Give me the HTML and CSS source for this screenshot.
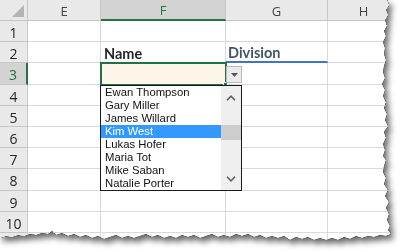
FILE: index.html
```html
<!DOCTYPE html>
<html lang="en">
<head>
    <meta charset="UTF-8">
    <title>Data Validation List</title>
    <link rel="stylesheet" href="styles.css">
</head>
<body>
    <div class="paper">
        <div class="sheet">
            <div class="grid">
                <div class="corner"><span class="corner-mark"></span></div>
                <div class="col-head">E</div>
                <div class="col-head active">F</div>
                <div class="col-head">G</div>
                <div class="col-head">H</div>

                <div class="row-head">1</div>
                <div class="cell"></div><div class="cell"></div><div class="cell"></div><div class="cell"></div>

                <div class="row-head">2</div>
                <div class="cell"></div>
                <div class="cell title">Name</div>
                <div class="cell title heading">Division</div>
                <div class="cell"></div>

                <div class="row-head active">3</div>
                <div class="cell"></div>
                <div class="cell selected"></div>
                <div class="cell"></div>
                <div class="cell"></div>

                <div class="row-head">4</div>
                <div class="cell"></div><div class="cell"></div><div class="cell"></div><div class="cell"></div>
                <div class="row-head">5</div>
                <div class="cell"></div><div class="cell"></div><div class="cell"></div><div class="cell"></div>
                <div class="row-head">6</div>
                <div class="cell"></div><div class="cell"></div><div class="cell"></div><div class="cell"></div>
                <div class="row-head">7</div>
                <div class="cell"></div><div class="cell"></div><div class="cell"></div><div class="cell"></div>
                <div class="row-head">8</div>
                <div class="cell"></div><div class="cell"></div><div class="cell"></div><div class="cell"></div>
                <div class="row-head">9</div>
                <div class="cell"></div><div class="cell"></div><div class="cell"></div><div class="cell"></div>
                <div class="row-head">10</div>
                <div class="cell"></div><div class="cell"></div><div class="cell"></div><div class="cell"></div>
                <div class="row-head">11</div>
                <div class="cell"></div><div class="cell"></div><div class="cell"></div><div class="cell"></div>
            </div>

            <div class="fill-handle"></div>

            <div class="dropdown-btn">
                <svg width="7" height="4" viewBox="0 0 7 4"><polygon points="0,0 7,0 3.5,4" fill="#555"/></svg>
            </div>

            <div class="listbox">
                <ul class="items">
                    <li>Ewan Thompson</li>
                    <li>Gary Miller</li>
                    <li>James Willard</li>
                    <li class="picked">Kim West</li>
                    <li>Lukas Hofer</li>
                    <li>Maria Tot</li>
                    <li>Mike Saban</li>
                    <li>Natalie Porter</li>
                </ul>
                <div class="scrollbar">
                    <svg class="arrow up" width="10" height="6" viewBox="0 0 10 6"><polyline points="1,5.2 5,1.2 9,5.2" fill="none" stroke="#606060" stroke-width="1.6"/></svg>
                    <div class="thumb"></div>
                    <svg class="arrow down" width="10" height="6" viewBox="0 0 10 6"><polyline points="1,0.8 5,4.8 9,0.8" fill="none" stroke="#606060" stroke-width="1.6"/></svg>
                </div>
            </div>
        </div>
    </div>
</body>
</html>
```

FILE: styles.css
```css
:root {
    --grid-line: #d9d9d9;
    --head-bg: #e9e9e9;
    --head-line: #c6c6c6;
    --head-active: #d3d3d3;
    --excel-green: #217346;
}

* {
    margin: 0;
    padding: 0;
    box-sizing: border-box;
}

body {
    background: white;
    width: 403px;
    height: 252px;
    overflow: hidden;
}

/* torn paper edge + shadow */
.paper {
    width: 403px;
    height: 252px;
    filter: drop-shadow(0 0 0.5px #000) drop-shadow(0 0 0.4px #000) drop-shadow(3px 4px 3px rgba(0, 0, 0, 0.6));
}

.sheet {
    position: relative;
    width: 403px;
    height: 252px;
    background: white;
    clip-path: polygon(-10px -10px, 388px -10px, 387px 0px, 389px 5px, 386px 10px, 388px 15px, 385px 20px, 387px 26px, 384px 31px, 386px 36px, 383px 42px, 385px 48px, 384px 54px, 386px 60px, 384px 66px, 383px 72px, 385px 78px, 382px 84px, 385px 90px, 383px 96px, 386px 102px, 384px 108px, 387px 114px, 385px 120px, 388px 126px, 384px 132px, 386px 138px, 383px 144px, 385px 150px, 383px 156px, 386px 160px, 384px 166px, 383px 172px, 386px 178px, 384px 184px, 388px 190px, 385px 196px, 389px 202px, 386px 208px, 389px 214px, 387px 220px, 390px 226px, 388px 230px, 391px 234px, 386px 236px, 380px 235px, 374px 237px, 368px 236px, 362px 238px, 356px 236px, 350px 239px, 344px 237px, 338px 240px, 332px 238px, 326px 240px, 320px 238px, 314px 240px, 308px 237px, 302px 239px, 296px 237px, 290px 240px, 284px 236px, 278px 238px, 272px 236px, 266px 238px, 260px 235px, 254px 237px, 248px 234px, 242px 236px, 236px 234px, 230px 237px, 224px 235px, 218px 237px, 212px 234px, 206px 236px, 200px 238px, 194px 235px, 188px 237px, 182px 235px, 176px 238px, 170px 236px, 164px 238px, 158px 235px, 152px 237px, 146px 234px, 140px 236px, 134px 238px, 128px 236px, 122px 238px, 116px 235px, 110px 237px, 104px 239px, 98px 236px, 92px 238px, 86px 235px, 80px 237px, 74px 234px, 68px 236px, 62px 233px, 56px 235px, 52px 231px, 48px 234px, 42px 233px, 36px 235px, 30px 234px, 24px 236px, 18px 235px, 12px 237px, 6px 236px, 0px 238px, -10px 238px);
}

.grid {
    display: grid;
    grid-template-columns: 28px 73px 125px 102px 72px;
    grid-template-rows: 21px repeat(11, 21.2px);
    font-family: "Open Sans", sans-serif;
}

.corner,
.col-head,
.row-head {
    background: var(--head-bg);
    border-right: 1px solid var(--head-line);
    border-bottom: 1px solid var(--head-line);
    color: #444;
}

.corner {
    position: relative;
}

.corner-mark {
    position: absolute;
    right: 3px;
    bottom: 3px;
    width: 0;
    height: 0;
    border-left: 12px solid transparent;
    border-bottom: 12px solid #b4b4b4;
}

.col-head {
    display: flex;
    align-items: center;
    justify-content: center;
    font-size: 13px;
    padding-top: 1px;
}

.col-head.active {
    background: var(--head-active);
    color: var(--excel-green);
    border-bottom: 2px solid var(--excel-green);
}

.row-head {
    display: flex;
    align-items: center;
    justify-content: center;
    font-size: 14px;
    color: #262626;
    padding-top: 3px;
}

.row-head.active {
    background: var(--head-active);
    color: var(--excel-green);
    border-right: 2px solid var(--excel-green);
}

.cell {
    border-right: 1px solid var(--grid-line);
    border-bottom: 1px solid var(--grid-line);
}

.title {
    display: flex;
    align-items: flex-end;
    padding: 0 0 0 3px;
    font-family: Lato, sans-serif;
    font-weight: 700;
    font-size: 14.5px;
    color: #262626;
}

.heading {
    color: #44546a;
    border-bottom: 2px solid #4472c4;
    padding-left: 2px;
}

.selected {
    background: #fdf6e8;
    outline: 2px solid var(--excel-green);
    outline-offset: -1px;
    position: relative;
    z-index: 1;
}

.fill-handle {
    position: absolute;
    left: 223px;
    top: 82px;
    width: 5px;
    height: 5px;
    background: var(--excel-green);
    border: 1px solid white;
    z-index: 2;
}

.dropdown-btn {
    position: absolute;
    left: 226px;
    top: 66px;
    width: 16px;
    height: 17px;
    background: #ebebeb;
    border: 1px solid #b9b9b9;
    display: flex;
    align-items: center;
    justify-content: center;
    z-index: 2;
}

.listbox {
    position: absolute;
    left: 100px;
    top: 85px;
    width: 142px;
    height: 106px;
    background: white;
    border: 1px solid #1a1a1a;
    display: flex;
    z-index: 3;
}

.items {
    list-style: none;
    flex: 1;
    font-family: "Liberation Sans", Arial, sans-serif;
    font-size: 11.3px;
    color: #111;
}

.items li {
    height: 13px;
    line-height: 13px;
    padding-left: 4px;
    white-space: nowrap;
}

.items li.picked {
    background: #3399ff;
    color: white;
}

.scrollbar {
    width: 20px;
    background: #efefef;
    position: relative;
}

.arrow {
    position: absolute;
    left: 5px;
}

.arrow.up {
    top: 9px;
}

.arrow.down {
    bottom: 8px;
}

.thumb {
    position: absolute;
    left: 0;
    right: 0;
    top: 39px;
    height: 15px;
    background: #cdcdcd;
}
```
